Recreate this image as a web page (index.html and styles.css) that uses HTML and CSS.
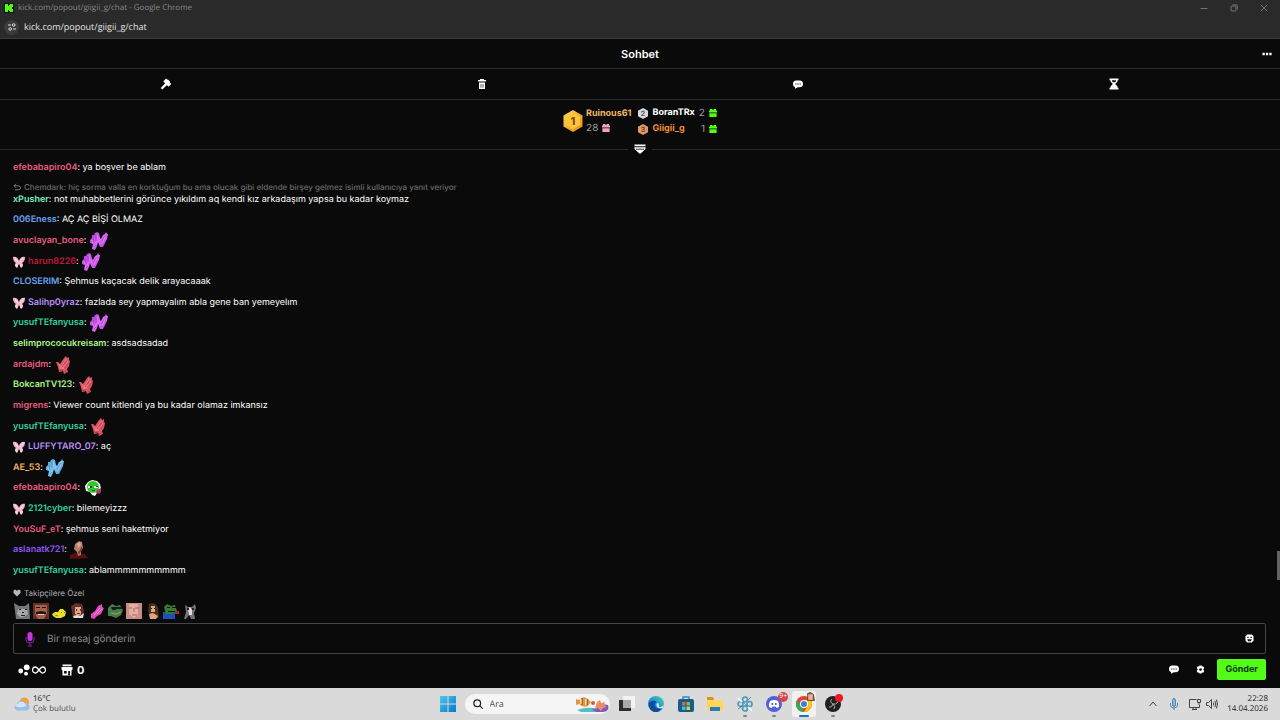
FILE: index.html
```html
<!DOCTYPE html>
<html lang="tr">
<head>
<meta charset="utf-8">
<title>kick.com/popout/giigii_g/chat</title>
<link rel="stylesheet" href="styles.css">
</head>
<body>
<svg class="defs" aria-hidden="true">
  <defs>
    <linearGradient id="gloveFill" x1="0" y1="0" x2="1" y2="1"><stop offset="0" stop-color="#a92bd0"/><stop offset=".5" stop-color="#dc6cf6"/><stop offset="1" stop-color="#b126d8"/></linearGradient>
    <linearGradient id="gloveBlue" x1="0" y1="0" x2="1" y2="1"><stop offset="0" stop-color="#3f9ed8"/><stop offset=".5" stop-color="#7cc8f0"/><stop offset="1" stop-color="#2b7fc4"/></linearGradient>
    <linearGradient id="edgeFill" x1="0" y1="1" x2="1" y2="0"><stop offset="0" stop-color="#0c56a8"/><stop offset=".55" stop-color="#1f9bde"/><stop offset="1" stop-color="#5fd87a"/></linearGradient>
    <linearGradient id="winFill" x1="0" y1="0" x2="1" y2="1"><stop offset="0" stop-color="#4cc8f0"/><stop offset="1" stop-color="#0a78c8"/></linearGradient>
    <linearGradient id="goldFill" x1="0" y1="0" x2="1" y2="1"><stop offset="0" stop-color="#ffd95a"/><stop offset="1" stop-color="#e78a10"/></linearGradient>
  </defs>
  <symbol id="gloves" viewBox="0 0 20 20">
    <path d="M1 12 1 9 3 7 3 4 5 4 6 2 8 1 10 2 11 7 12 8 14 4 16 3 17 1 18 3 19 3 18 8 16 12 14 16 11 16 9 11 8 15 6 19 3 18 4 13Z"/>
    <path d="M4 7 5 12M7 4 7 10M12 11 16 5M5 16 7 14" fill="none" stroke="#5c1181" stroke-opacity=".4" stroke-width=".8"/>
    <path d="M3 9 4 12M8 3 9 8M16 6 13 13" fill="none" stroke="#ffd4ff" stroke-opacity=".4" stroke-width=".8"/>
  </symbol>
  <symbol id="clap" viewBox="0 0 20 20">
    <path fill="#d9505f" d="M5 17 4 12 2 7 4 7 6 9 8 6 10 3 12 1 13 3 15 2 15 5 16 6 15 11 13 14 14 17 10 19 9 16 6 17Z"/>
    <path fill="#e8757e" d="M4 8 6 10 7 11 12 3 13 4 10 9 11 10 14 5 14 8 10 14 6 14Z"/>
    <path d="M8 12 12 6M10 13 14 8M5 16 9 15M11 16 13 18" fill="none" stroke="#8c1f30" stroke-opacity=".6" stroke-width=".8"/>
  </symbol>
  <symbol id="wings" viewBox="0 0 12 12">
    <path fill="#f6b7cc" d="M0 1C3 0 5 2 6 5 7 2 9 0 12 1 12 4 11 6 9 7 11 8 10 11 8 12 7 11 7 9 6 8 5 9 5 11 4 12 2 11 1 8 3 7 1 6 0 4 0 1Z"/>
    <path fill="none" stroke="#fff0f5" d="M2 2 5 6M10 2 7 6M4 8 4 11M8 8 8 11" stroke-width=".8"/>
  </symbol>
  <symbol id="gift" viewBox="0 0 8 8"><path d="M1 0H3L4 1 5 0H7V1.5H8V3.4H0V1.5H1ZM.4 4.2H7.6V8H.4Z"/></symbol>
  <symbol id="bubble" viewBox="0 0 10 9"><path fill="#fff" d="M3.5.5H6.5C9 .5 10 2 10 4S9 7.2 6.5 7.2H4.7L2 8.7V7C.6 6.600 0 5.500 0 4 0 2 1 .5 3.500.5Z"/><path fill="#111" d="M2.200 3.400h1.200v1.200H2.200ZM4.400 3.400h1.200v1.200H4.400ZM6.600 3.400h1.200v1.200H6.600Z"/></symbol>
</svg>

<header class="titlebar">
  <svg class="favicon" viewBox="0 0 10 10"><rect width="10" height="10" fill="#0b160a"/><path fill="#53fc18" d="M1 1h3v2h1V2h1V1h3v3H8v2h1v3H6V8H5V7H4v2H1Z"/></svg>
  <span class="window-title">kick.com/popout/giigii_g/chat - Google Chrome</span>
  <div class="window-controls">
    <button aria-label="Simge durumuna küçült"><svg viewBox="0 0 8 8"><path d="M.5 4.500h7"/></svg></button>
    <button aria-label="Önceki boyut"><svg viewBox="0 0 8 8"><path d="M1 3q0-1 1-1h3q1 0 1 1v3q0 1-1 1H2Q1 7 1 6ZM2.500.8H6q1.300 0 1.300 1.300v3.400"/></svg></button>
    <button aria-label="Kapat"><svg viewBox="0 0 8 8"><path d="M.7.7l6.600 6.600M7.300.7.7 7.300"/></svg></button>
  </div>
</header>
<nav class="urlbar">
  <button class="site-info" aria-label="Site bilgileri"><svg viewBox="0 0 10 10"><path d="M1 3h3M6 7h3"/><circle cx="6.700" cy="3" r="1.300"/><circle cx="3.200" cy="7" r="1.300"/></svg></button>
  <span>kick.com/popout/giigii_g/chat</span>
</nav>

<main class="chat">
  <div class="chat-header">
    <h1>Sohbet</h1>
    <button class="more" aria-label="Diğer"><svg viewBox="0 0 10 4"><path fill="#fff" d="M.5.700h2.300V3.300H.5ZM3.900.700h2.300V3.300H3.900ZM7.300.700h2.300V3.300H7.300Z"/></svg></button>
  </div>
  <div class="tools">
    <button aria-label="Yasakla"><svg viewBox="0 0 12 12"><path fill="#fff" d="M3.200 3.400 6 .6 7 1.500 8.200 1.700 10 3.500 10.200 5 11.300 6 8.600 8.700 7.600 7.700 6.800 7.200 2.300 11.500.7 9.900 5 5.500 4.300 4.500Z"/></svg></button>
    <button aria-label="Sil"><svg viewBox="0 0 12 12"><path fill="#fff" d="M4 1h4v1h2v1.500H2V2h2ZM3 4.400h6V11H3Z"/><path stroke="#333" stroke-width=".8" d="M5 6v3.700M7 6v3.700"/></svg></button>
    <button aria-label="Sohbet modu"><svg viewBox="-1 -1 12 12"><use href="#bubble" y="1" width="10" height="9"/></svg></button>
    <button aria-label="Zaman aşımı"><svg viewBox="0 0 12 12"><path fill="#fff" d="M1.500.5h9v1.700H9.500v1.300L7.200 6l2.300 2.500v1.300h1v1.700h-9V9.800h1V8.500L4.800 6 2.500 3.500V2.200h-1Z"/><path fill="#111" d="M4 2.200h4v1L6.800 4.300H5.200L4 3.200Z"/></svg></button>
  </div>
  <section class="leaders" aria-label="Hediye sıralaması">
    <div class="first">
      <svg class="medal" viewBox="0 0 20 22"><path fill="url(#goldFill)" d="M10 0 19.500 5.500v11L10 22 .5 16.500v-11Z"/><path fill="#ffc63c" d="M10 3 17 7v8l-7 4-7-4V7Z"/><text x="10" y="15" text-anchor="middle" font-size="11" font-weight="800" fill="#8a4a06">1</text></svg>
      <div class="first-text"><b class="gold">Ruinous61</b><span class="count">28 <svg class="gift pink"><use href="#gift"/></svg></span></div>
    </div>
    <div class="others">
      <svg class="rank" viewBox="0 0 10 11"><path fill="#d6dade" d="M5 0 10 2.800v5.400L5 11 0 8.200V2.800Z"/><text x="5" y="8" text-anchor="middle" font-size="7" font-weight="700" fill="#555b61">2</text></svg>
      <b>BoranTRx</b><span class="count">2</span><svg class="gift"><use href="#gift"/></svg>
      <svg class="rank" viewBox="0 0 10 11"><path fill="#df9a68" d="M5 0 10 2.800v5.400L5 11 0 8.200V2.800Z"/><text x="5" y="8" text-anchor="middle" font-size="7" font-weight="700" fill="#70401f">3</text></svg>
      <b class="orange">Giigii_g</b><span class="count">1</span><svg class="gift"><use href="#gift"/></svg>
    </div>
  </section>
  <div class="divider"><button aria-label="Sıralamayı genişlet"><svg viewBox="0 0 12 10"><path fill="#fff" d="M.5.500h11v1.700H.5ZM.5 3.300h11V5L6.700 9.500H5.300L.5 5Z"/><path stroke="#333" d="M2 5.200h8"/></svg></button></div>

  <ul class="messages">
    <li><button class="user rose">efebabapiro04</button>: ya boşver be ablam</li>
    <li class="reply"><span class="quote"><svg viewBox="0 0 8 8"><path d="M3 .8 1 2.800l2 2M1 2.800h4.500q2 0 2 2t-2 2H2"/></svg>Chemdark: hiç sorma valla en korktuğum bu ama olucak gibi eldende birşey gelmez isimli kullanıcıya yanıt veriyor</span><span class="line"><button class="user mint">xPusher</button>: not muhabbetlerini görünce yıkıldım aq kendi kız arkadaşım yapsa bu kadar koymaz</span></li>
    <li><button class="user blue">006Eness</button>: AÇ AÇ BİŞİ OLMAZ</li>
    <li><button class="user rose">avuclayan_bone</button>: <svg class="emote violet"><use href="#gloves"/></svg></li>
    <li><svg class="badge"><use href="#wings"/></svg><button class="user crimson">harun8226</button>: <svg class="emote violet"><use href="#gloves"/></svg></li>
    <li><button class="user blue">CLOSERIM</button>: Şehmus kaçacak delik arayacaaak</li>
    <li><svg class="badge"><use href="#wings"/></svg><button class="user lilac">Salihp0yraz</button>: fazlada sey yapmayalım abla gene ban yemeyelım</li>
    <li><button class="user teal">yusufTEfanyusa</button>: <svg class="emote violet"><use href="#gloves"/></svg></li>
    <li><button class="user lime">selimprococukreisam</button>: asdsadsadad</li>
    <li><button class="user rose">ardajdm</button>: <svg class="emote"><use href="#clap"/></svg></li>
    <li><button class="user lime">BokcanTV123</button>: <svg class="emote"><use href="#clap"/></svg></li>
    <li><button class="user rose">migrens</button>: Viewer count kitlendi ya bu kadar olamaz imkansız</li>
    <li><button class="user teal">yusufTEfanyusa</button>: <svg class="emote"><use href="#clap"/></svg></li>
    <li><svg class="badge"><use href="#wings"/></svg><button class="user lilac">LUFFYTARO_07</button>: aç</li>
    <li><button class="user amber">AE_53</button>: <svg class="emote azure"><use href="#gloves"/></svg></li>
    <li><button class="user rose">efebabapiro04</button>: <svg class="emote" viewBox="0 0 20 20"><path fill="#fff" d="M2 8 5 4 9 2 14 3 17 6 18 11 14 15 12 18 9 17 7 14 3 13Z"/><circle cx="10" cy="9" r="6" fill="#2fc92c"/><path fill="#eaffea" d="M5 8h4v2H5ZM11 8h4v2h-4Z"/><path fill="#17551b" d="M7 8h2v2H7ZM13 8h2v1h-2ZM9 12h3v1H9Z"/><path fill="#bd2b75" d="M14 12l4-2v4l-2 2-3-1Z"/></svg></li>
    <li><svg class="badge"><use href="#wings"/></svg><button class="user teal">2121cyber</button>: bilemeyizzz</li>
    <li><button class="user rose">YouSuF_eT</button>: şehmus seni haketmiyor</li>
    <li><button class="user purple">aslanatk721</button>: <svg class="emote" viewBox="0 0 20 20"><path fill="#571014" d="M1 15 6 13 11 14 16 14 19 18 1 19Z"/><path fill="#b87e6c" d="M6 4 10 1 13 2 14 8 12 11 12 15 9 16 8 12 5 9Z"/><path fill="#70402f" d="M12 7 14 8 12 11 10 15 9 12 11 10Z"/><path fill="#dfaa96" d="M8 4 11 2 12 5 9 8Z"/></svg></li>
    <li><button class="user teal">yusufTEfanyusa</button>: ablammmmmmmmmm</li>
  </ul>

  <footer class="composer">
    <p class="followers"><svg viewBox="0 0 8 8"><path fill="#b5b8ba" d="M4 7.500.5 4V1.500L2 .5 4 1.700 6 .5 7.500 1.500V4Z"/></svg>Takipçilere Özel</p>
    <div class="quick">
      <button aria-label="Kedi"><svg viewBox="0 0 16 16"><path fill="#74787b" d="M0 0 5 3h6l4-3 1 16H2Z"/><path fill="#a5a8a8" d="M4 6h9l1 5-4 3H6L3 11Z"/><path fill="#222" d="M5 6h2v1H5ZM11 6h2v1h-2ZM8 9h2v1H8ZM7 12h4v1H7Z"/></svg></button>
      <button aria-label="Bıyık"><svg viewBox="0 0 16 16"><path fill="#612f26" d="M0 0h16v16H0Z"/><path fill="#a9604b" d="M2 2h12v8l-3 6H5L2 11Z"/><path fill="#211514" d="M3 4h4v1H3ZM9 4h4v1H9ZM3 9l5-1 5 1v2H3Z"/><path fill="#ddd0c4" d="M5 11h6v1H5Z"/></svg></button>
      <button aria-label="Sarı"><svg viewBox="0 0 16 16"><path fill="#eadf27" d="M1 11 4 9 7 9 9 6 12 6 15 9 14 13 10 15H5L2 13Z"/><path stroke="#735b0c" stroke-width=".7" fill="none" d="M4 12l3 1M10 9l1 1M13 9l1 1"/></svg></button>
      <button aria-label="Kız"><svg viewBox="0 0 16 16"><path fill="#623126" d="M1 3 6 0l6 1 2 6-2 8H3Z"/><path fill="#dba68b" d="M5 4h6v7l-2 2-4-2Z"/><path fill="#ddd" d="M3 13l4-1 3 1 4-3-1 5H4Z"/><path fill="#80231f" d="M6 6h1v2H6ZM10 6h1v2h-1ZM7 10h3v1H7Z"/></svg></button>
      <button aria-label="Pembe eldiven"><svg viewBox="0 0 16 16"><path fill="#dd4bbe" d="M2 15 2 11 6 8 9 3 13 1 13 4 15 5 12 11 8 13 5 16Z"/><path stroke="#ff94e2" stroke-width=".8" d="M5 12 11 5M8 11l5-5"/></svg></button>
      <button aria-label="Kurbağa"><svg viewBox="0 0 16 16"><path fill="#477d48" d="M1 5 5 1 9 3 13 2l3 5-2 5-5 3-5-2H1Z"/><path fill="#122018" d="M4 4h5v3H5ZM9 4h6v2H9Z"/><path stroke="#93a86c" fill="none" d="M4 10l5 1 5-2"/></svg></button>
      <button aria-label="Yüz"><svg viewBox="0 0 16 16"><path fill="#c98d86" d="M0 0h16v16H0Z"/><path fill="#e5aea4" d="M3 1h9v11l-4 3-5-4Z"/><path stroke="#8f5650" stroke-width=".8" fill="none" d="M3 5h3M9 5h4M8 5v4M6 12h5"/></svg></button>
      <button aria-label="Esmer"><svg viewBox="0 0 16 16"><path fill="#4c2e1e" d="M4 1 9 0l4 4 1 11H6L3 8Z"/><path fill="#dfa57d" d="M6 3h4v6H6ZM4 11l4-1 5 3-2 3H5Z"/><path fill="#241510" d="M6 5h1v1H6ZM9 5h1v1H9Z"/></svg></button>
      <button aria-label="Pepe gül"><svg viewBox="0 0 16 16"><path fill="#1d4fbd" d="M0 9h12v7H0Z"/><path fill="#367e2f" d="M1 4 4 1 8 3l4-1 2 6-5 3H3Z"/><path fill="#111" d="M4 4h3v1H4ZM9 4h4v1H9ZM5 8h7v1H5Z"/><path fill="#c11b27" d="M12 8h4v3h-4Z"/></svg></button>
      <button aria-label="Kedicik"><svg viewBox="0 0 16 16"><path fill="#777078" d="M3 2 6 4h4l3-3 1 4-2 5 1 6H9L7 12l-3 4H2L4 9Z"/><path fill="#e6dadc" d="M6 6l2-2 2 3v5H7Z"/><path fill="#241f26" d="M5 5h2v2H5ZM10 5h2v2h-2Z"/></svg></button>
    </div>
    <div class="input-box">
      <svg class="mic" viewBox="0 0 10 16"><rect x="2.500" y="1" width="5" height="9" rx="2.500" fill="#c33ae2"/><path fill="none" stroke="#8c20b3" d="M1 6v3q0 3 4 3t4-3V6M5 12v3M3 15h4"/></svg>
      <input type="text" placeholder="Bir mesaj gönderin" aria-label="Bir mesaj gönderin">
      <button aria-label="İfade seç"><svg class="smile" viewBox="0 0 10 10"><path fill="#fff" d="M2.500.5h5l2 2v5l-2 2h-5l-2-2v-5Z"/><path fill="#111" d="M2.500 3h1.500v1.500H2.500ZM6 3h1.500v1.500H6ZM2.500 5.700h5L6.500 8h-3Z"/></svg></button>
    </div>
    <div class="actions">
      <button class="points" aria-label="Kanal puanları"><svg class="dots" viewBox="0 0 12 12"><circle cx="8.700" cy="3.300" r="2.900" fill="#fff"/><circle cx="2.700" cy="7" r="2.400" fill="#fff"/><circle cx="8" cy="9.700" r="1.900" fill="#fff"/></svg><svg class="infinity" viewBox="0 0 14 8"><path fill="none" stroke="#fff" stroke-width="1.300" d="M7 4C5.500 2 4.700 1 3.500 1a3 3 0 0 0 0 6C4.700 7 5.500 6 7 4S9.300 1 10.500 1a3 3 0 0 1 0 6C9.300 7 8.500 6 7 4Z"/></svg></button>
      <button class="shop" aria-label="Mağaza, 0"><svg viewBox="0 0 12 12"><path fill="#fff" d="M1.500.5h9v1.800h-9ZM.5 3h11v2.500l-1 1v5H1.500v-5l-1-1Z"/><path fill="#111" d="M3 7h2.700v2.500H3ZM7.200 7H9v4.500H7.200Z"/></svg><b>0</b></button>
      <div class="send-group">
        <button aria-label="Sohbet"><svg class="talk"><use href="#bubble"/></svg></button>
        <button aria-label="Ayarlar"><svg class="gear" viewBox="0 0 10 10"><path fill="#fff" fill-rule="evenodd" d="M3.800.5h2.400l.4 1.300 1.400-.4L9.200 3.400l-.9 1v1.200l.9 1L8 8.600l-1.400-.4-.4 1.300H3.800L3.400 8.200 2 8.600.8 6.600l.9-1V4.400l-.9-1L2 1.400l1.400.4ZM5 3.500a1.500 1.500 0 1 0 .01 0Z"/></svg></button>
        <button class="send">Gönder</button>
      </div>
    </div>
  </footer>
  <span class="scroll-thumb"></span>
</main>

<footer class="taskbar">
  <button class="weather"><svg viewBox="0 0 18 16"><circle cx="12" cy="6" r="5" fill="#f0a03c"/><path fill="#98bfe9" d="M4 15a3.700 3.700 0 0 1 0-7 5 5 0 0 1 9-1 4 4 0 0 1 1 8Z"/><path fill="#d5e5f8" d="M2 10a4 4 0 0 1 3-2 4.500 4.500 0 0 1 8 0l1 2q-6 3-12 0Z"/></svg><span>16°C<br><em>Çok bulutlu</em></span></button>
  <div class="dock">
    <button class="app" aria-label="Başlat"><svg viewBox="0 0 16 16"><path fill="url(#winFill)" d="M0 0h7.500v7.500H0ZM8.500 0H16v7.500H8.500ZM0 8.500h7.500V16H0ZM8.500 8.500H16V16H8.500Z"/></svg></button>
    <label class="search"><svg class="lens" viewBox="0 0 10 10"><circle cx="4.200" cy="4.200" r="3.400"/><path d="m6.700 6.700 3 3"/></svg><input type="search" placeholder="Ara" aria-label="Ara"><svg class="fish" viewBox="0 0 34 16"><path fill="#54bec4" d="M2 14q8-3 16-2l8 1-6 3H6Z"/><path fill="#7e58c2" d="M17 13q7 0 10-5l6 1q2 6-5 7h-7Z"/><path fill="#e8953b" d="M1 3l3 1Q8-1 13 3l3 3-3 4q-5 2-9-2L1 9Z"/><path stroke="#fff" stroke-width="1.200" d="M6 3v5M11 3v6"/><path stroke="#49372d" stroke-width=".7" d="M7.200 2v7M12.200 3v6"/><path fill="#ed8e63" d="M22 6l3-2 1 3 4-1-1 3 3 2-4 1-2 3-3-3-3 1 1-4Z"/><circle cx="18" cy="7" r="2" fill="#bb6937"/></svg></label>
    <div class="apps">
      <button class="app" aria-label="Görev görünümü"><svg viewBox="0 0 16 16"><path fill="#f3f3f3" d="M4 0h12v12H4Z"/><path fill="#2c2c2c" d="M0 4h4v8h8v3H0Z"/><path fill="#aaa" d="M4 4h8v8H4Z"/></svg></button>
      <button class="app" aria-label="Edge"><svg viewBox="0 0 16 16"><circle cx="8" cy="8" r="8" fill="url(#edgeFill)"/><path fill="#0d4c98" d="M1 7q4-4 8-1-3 1-2 4 2 4 7 2-3 5-8 4Q1 14 1 7Z"/><path fill="#dce8ed" d="M9 7q2 0 2 2-1 2 1 2 3 0 4-3l-1 4q-4 1-6-1-1-2 0-4Z"/></svg></button>
      <button class="app" aria-label="Microsoft Store"><svg viewBox="0 0 16 16"><path fill="none" stroke="#368bc1" stroke-width="1.500" d="M5 4V1h6v3"/><rect y="3" width="16" height="13" rx="2" fill="#155d8d"/><path fill="#e75d3d" d="M4 6h3.500v3.500H4Z"/><path fill="#84bd42" d="M8.500 6H12v3.500H8.500Z"/><path fill="#49b9e9" d="M4 10.500h3.500V14H4Z"/><path fill="#f4c43b" d="M8.500 10.500H12V14H8.500Z"/></svg></button>
      <button class="app" aria-label="Dosya Gezgini"><svg viewBox="0 0 16 16"><path fill="#d99422" d="M0 1h6l1 2v3H0Z"/><path fill="#ffd55e" d="M0 4h15q1 0 1 1v10H0Z"/><path fill="#247db4" d="M3 11h10v4H3Z"/></svg></button>
      <button class="app running" aria-label="Uygulama"><svg viewBox="0 0 16 16"><g fill="none" stroke="#499db9" stroke-width="1.700"><circle cx="8" cy="3.500" r="2.500"/><circle cx="8" cy="12.500" r="2.500"/><circle cx="3.500" cy="8" r="2.500"/><circle cx="12.500" cy="8" r="2.500"/></g><path stroke="#f7f7f7" stroke-width="1.700" d="m1 2 4 4M11 11l4 4"/><path stroke="#4f6c75" fill="none" stroke-width=".7" d="M6 6l4 4M1 13l4-3M11 4l3-3"/></svg></button>
      <button class="app running" aria-label="Discord, 9+ bildirim"><svg viewBox="0 0 16 16"><circle cx="8" cy="8" r="8" fill="#5360d8"/><path fill="#fff" d="M4 5q4-2 8 0 1.500 3 1 6l-2.500 1-1-1.500h-3l-1 1.500L3 11q-.5-3 1-6Z"/><path fill="#5360d8" d="M5.500 7h1.700v2H5.500ZM8.900 7h1.700v2H8.900Z"/></svg><span class="notice">9+</span></button>
      <button class="app active" aria-label="Google Chrome"><svg viewBox="0 0 16 16"><circle cx="8" cy="8" r="8" fill="#e54335"/><path fill="#35a853" d="M1 4l5 7 2 5A8 8 0 0 1 1 4Z"/><path fill="#fbc116" d="M8 4h7a8 8 0 0 1-7 12l4-7Z"/><circle cx="8" cy="8" r="4" fill="#fff"/><circle cx="8" cy="8" r="3" fill="#397ed9"/></svg><svg class="avatar" viewBox="0 0 8 8"><path fill="#76503a" d="M1 1 4 0l3 2 1 6H1Z"/><path fill="#e9b894" d="M2 2h4v5H2Z"/></svg></button>
      <button class="app running" aria-label="OBS Studio"><svg viewBox="0 0 16 16"><circle cx="8" cy="8" r="8" fill="#1f2022"/><g fill="none" stroke="#a7a8aa" stroke-width="1"><path d="M7 3q-3 3 1 5 3 1 5-2M4 11q3 1 4-3M9 13q2-2-1-5"/></g></svg><span class="rec"></span></button>
    </div>
  </div>
  <div class="tray">
    <button aria-label="Gizli simgeler"><svg viewBox="0 0 12 12"><path d="m2.500 8 3.500-4L9.500 8"/></svg></button>
    <button aria-label="Mikrofon"><svg class="tray-mic" viewBox="0 0 12 12"><path fill="#8cb8db" d="M4.500 2.500q0-2 1.500-2t1.500 2v4q0 2-1.500 2t-1.500-2Z"/><path d="M2.500 5v2q0 3 3.500 3t3.500-3V5M6 10v2"/></svg></button>
    <button aria-label="Ağ"><svg viewBox="0 0 12 12"><path d="M7.500 1.500h-7v8h10V7M3 11.500h5M4 9.500v2M7 9.500v2M8.500 1.500h3v3h-3ZM10 4.500v2.500"/></svg></button>
    <button aria-label="Ses"><svg viewBox="0 0 12 12"><path d="M.5 4.500h2l3-3v9l-3-3h-2ZM7.200 4.500q1 1.500 0 3M8.800 3q2 3 0 6M10.300 1.500q2.500 4.500 0 9"/></svg></button>
    <time datetime="2026-04-14T22:28">22:28<br>14.04.2026</time>
  </div>
</footer>
</body>
</html>
```
FILE: styles.css
```css
* { box-sizing: border-box; }

body {
  margin: 0;
  min-height: 100vh;
  display: flex;
  flex-direction: column;
  background: #0a0a0a;
  color: #fff;
  font: 400 9px/14px Inter, sans-serif;
  text-rendering: geometricPrecision;
  overflow: hidden;
}

button, input {
  border: 0;
  padding: 0;
  margin: 0;
  background: none;
  color: inherit;
  font: inherit;
  text-rendering: inherit;
}

svg { display: block; flex: none; }
.defs { position: absolute; width: 0; height: 0; }

/* Browser window */
.titlebar, .urlbar {
  display: flex;
  align-items: center;
  background: #2a2a2a;
  font-family: "Open Sans", sans-serif;
  font-weight: 400;
}
.titlebar { height: 16px; padding: 0 12px 0 4px; gap: 4px; color: #858585; font-size: 8px; }
.favicon { width: 10px; height: 10px; }
.window-controls { display: flex; gap: 22px; margin-left: auto; }
.window-controls svg { width: 8px; height: 8px; fill: none; stroke: #858585; stroke-width: .8; }
.urlbar { height: 23px; padding: 0 4px; gap: 5px; color: #e4e4e4; border-bottom: 1px solid #3a3a3a; }
.site-info { width: 15px; height: 15px; display: grid; place-items: center; border-radius: 50%; background: #3b3b3b; }
.site-info svg { width: 10px; height: 10px; fill: none; stroke: #ddd; }

/* Chat */
.chat { position: relative; flex: 1; display: flex; flex-direction: column; }
.chat-header { display: grid; grid-template-columns: 1fr auto 1fr; align-items: center; height: 30px; padding: 0 8px; border-bottom: 1px solid #2a2a2a; }
.chat-header h1 { grid-column: 2; margin: 0; font-size: 11px; font-weight: 600; }
.more { justify-self: end; }
.more svg { width: 10px; height: 4px; }
.tools { display: grid; grid-template-columns: repeat(4, 1fr); height: 31px; padding: 0 8px; border-bottom: 1px solid #2a2a2a; }
.tools button { display: grid; place-items: center; }
.tools svg { width: 12px; height: 12px; }

.leaders { display: flex; justify-content: center; gap: 7px; padding: 5px 0 7px; }
.leaders b { font-weight: 700; color: #fff; }
.leaders .gold { color: #f0b568; }
.leaders .orange { color: #ee8f37; }
.first { display: flex; gap: 3px; align-items: center; height: 32px; }
.medal { width: 20px; height: 22px; }
.first-text { display: flex; flex-direction: column; }
.count { display: flex; align-items: center; gap: 4px; color: #9b9da0; font-size: 10px; }
.gift { width: 8px; height: 8px; fill: #53fc18; }
.gift.pink { fill: #f3a3bf; }
.others { display: grid; grid-template-columns: 10px auto auto 8px; grid-auto-rows: 16px; column-gap: 4px; align-items: center; }
.others .count { justify-content: flex-end; }
.rank { width: 10px; height: 11px; }
.divider { display: flex; align-items: center; gap: 6px; height: 10px; }
.divider::before, .divider::after { content: ""; flex: 1; height: 1px; background: #2a2a2a; }
.divider svg { width: 12px; height: 10px; }

.messages {
  flex: 1;
  display: flex;
  flex-direction: column;
  justify-content: space-between;
  margin: 0;
  padding: 7px 13px 9px;
  list-style: none;
}
.messages li { display: flex; align-items: center; height: 14px; white-space: pre; }
.messages .reply { display: block; height: 25px; }
.quote { display: flex; align-items: center; gap: 3px; font-size: 8px; font-weight: 500; line-height: 11px; color: #68696b; }
.quote svg { width: 8px; height: 8px; fill: none; stroke: #77787a; }
.line { display: flex; align-items: center; }
.user { font-weight: 600; }
.emote { width: 20px; height: 20px; margin-top: -3px; margin-bottom: -3px; }
.emote.violet { fill: url(#gloveFill); }
.emote.azure { fill: url(#gloveBlue); }
.badge { width: 12px; height: 12px; margin-right: 3px; }
.rose { color: #e65c7e; }
.mint { color: #80edc3; }
.blue { color: #6aa2f0; }
.crimson { color: #c0163a; }
.lilac { color: #b98ff8; }
.teal { color: #30cf9e; }
.lime { color: #aaf587; }
.amber { color: #f5b760; }
.purple { color: #9055f0; }

.composer { padding: 0 14px 8px 13px; }
.followers { display: flex; align-items: center; gap: 3px; height: 12px; margin: 0 0 4px; color: #aeb0b2; font-size: 8px; }
.followers svg { width: 8px; height: 8px; }
.quick { display: flex; justify-content: space-between; width: 184px; margin-left: 1px; }
.quick svg { width: 16px; height: 16px; }
.input-box { display: flex; align-items: center; height: 31px; margin-top: 4px; padding: 0 11px; border: 1px solid #454545; border-radius: 2px; }
.mic { width: 10px; height: 16px; }
.input-box input { flex: 1; margin: 0 12px; outline: 0; font-size: 10px; }
.input-box input::placeholder { color: #85908e; }
.smile { width: 9px; height: 9px; }
.actions { display: flex; align-items: center; margin-top: 5px; }
.points, .shop { display: flex; align-items: center; }
.points { gap: 2px; padding-left: 5px; }
.dots { width: 12px; height: 12px; }
.infinity { width: 14px; height: 8px; }
.shop { gap: 4px; margin-left: 15px; font-size: 11px; }
.shop svg { width: 12px; height: 12px; }
.send-group { display: flex; align-items: center; gap: 12px; margin-left: auto; }
.talk { width: 10px; height: 9px; }
.gear { width: 9px; height: 9px; margin: 0 0 0 5px; }
.send { height: 21px; padding: 0 8px; border-radius: 2px; background: #53fc18; color: #0c3903; font-weight: 700; }
.scroll-thumb { position: absolute; right: 0; bottom: 108px; width: 3px; height: 29px; background: #626262; }

/* Taskbar */
.taskbar {
  display: grid;
  grid-template-columns: 1fr auto 1fr;
  align-items: center;
  height: 32px;
  padding: 0 12px 0 13px;
  background: #dadada;
  color: #202020;
  font: 400 8px/10px "Open Sans", sans-serif;
}
.weather { display: flex; align-items: center; gap: 3px; text-align: left; }
.weather svg { width: 17px; height: 16px; }
.weather em { color: #555; font-style: normal; }
.dock { display: flex; align-items: center; gap: 5px; }
.app { position: relative; display: grid; place-items: center; width: 24px; height: 26px; border-radius: 3px; }
.app > svg { width: 16px; height: 16px; }
.apps { display: flex; justify-content: space-between; width: 231px; }
.search { display: flex; align-items: center; gap: 7px; width: 145px; height: 20px; padding: 0 1px 0 8px; border-radius: 10px; background: #f5f5f5; }
.search input { flex: 1; min-width: 0; font-size: 9px; outline: 0; }
.search input::placeholder { color: #555; }
.lens { width: 10px; height: 10px; fill: none; stroke: #222; stroke-width: 1.2; }
.fish { width: 34px; height: 16px; }
.running::after, .active::after { content: ""; position: absolute; bottom: 0; left: 10px; width: 4px; height: 2px; border-radius: 1px; background: #858585; }
.active { background: #f1f1f1; }
.active::after { left: 7px; width: 10px; background: #1774bd; }
.notice { position: absolute; top: 1px; right: -2px; width: 10px; height: 10px; border-radius: 5px; background: #d8404b; color: #fff; font-size: 7px; line-height: 10px; }
.app > .avatar { position: absolute; top: 1px; right: 1px; width: 9px; height: 9px; }
.rec { position: absolute; top: 3px; right: 2px; width: 8px; height: 8px; border-radius: 50%; background: #ef1721; }
.tray { display: flex; justify-content: flex-end; align-items: center; text-align: right; }
.tray svg { width: 12px; height: 12px; fill: none; stroke: #333; stroke-width: .9; }
.tray button { margin-right: 9px; }
.tray button:nth-of-type(3) { margin-right: 5px; }
.tray .tray-mic { stroke: #467ba7; }
```
